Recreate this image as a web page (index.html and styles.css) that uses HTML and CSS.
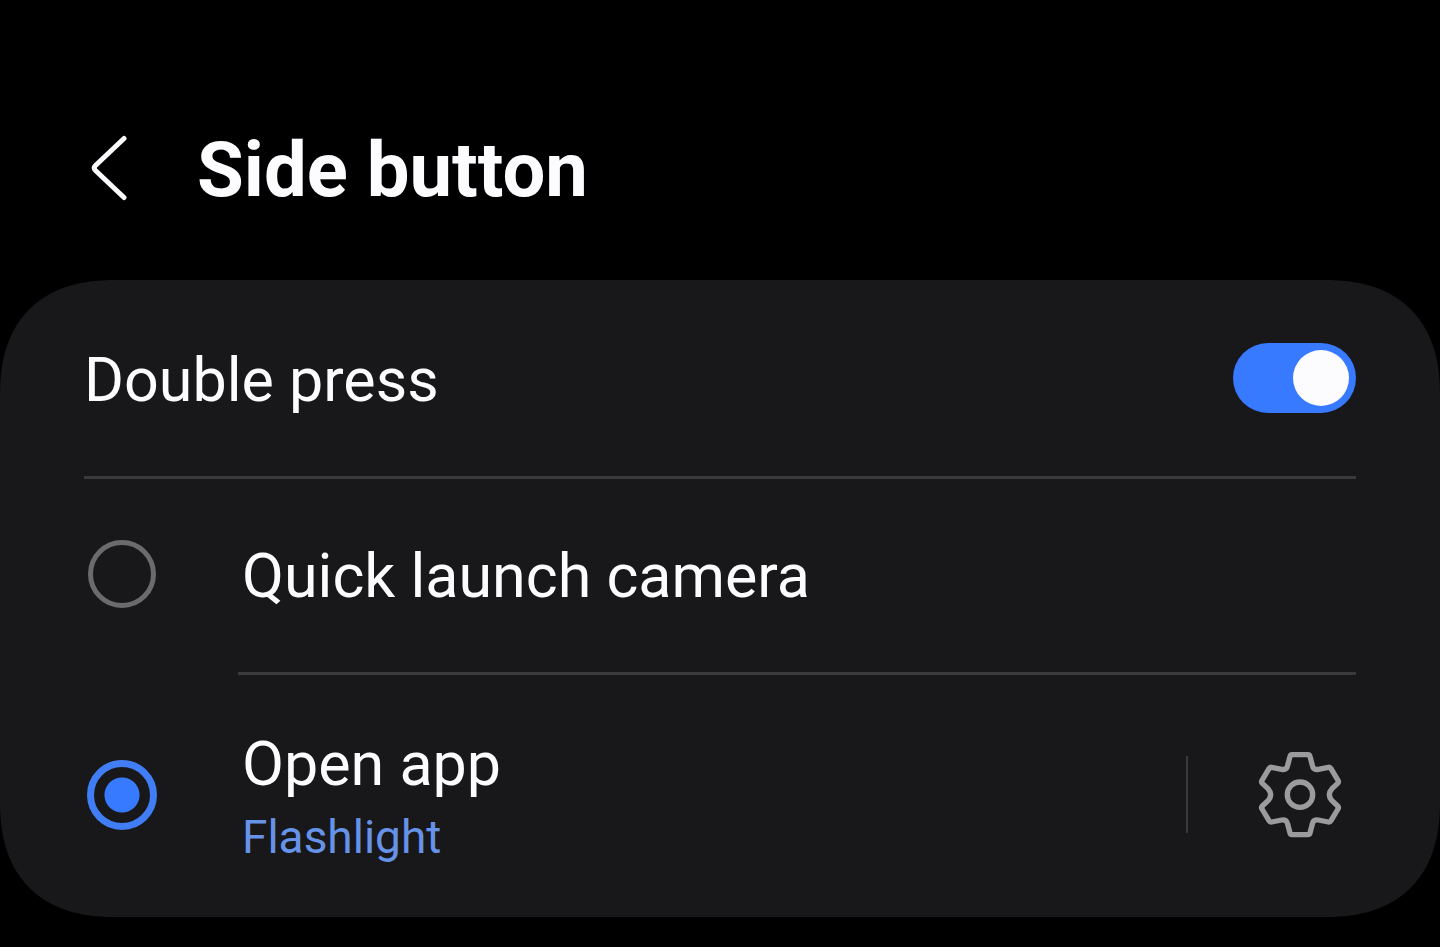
FILE: index.html
```
<!DOCTYPE html>
<html lang="en">
<head>
<meta charset="utf-8">
<meta name="viewport" content="width=device-width, initial-scale=1">
<title>Side button</title>
<link rel="stylesheet" href="styles.css">
</head>
<body>
<header class="header">
  <button class="icon-button" type="button" aria-label="Back">
    <svg class="chevron" viewBox="0 0 36 66" aria-hidden="true"><path d="M33 3.500L4.500 30.500Q2 33 4.500 35.500L33 62.500"/></svg>
  </button>
  <h1 class="title">Side button</h1>
</header>
<main class="card">
  <div class="row">
    <label class="label" for="double-press">Double press</label>
    <input class="switch" id="double-press" type="checkbox" role="switch" checked>
  </div>
  <div class="row row-option">
    <input class="radio" id="camera" type="radio" name="action">
    <label class="label" for="camera">Quick launch camera</label>
  </div>
  <div class="row row-option row-tall">
    <input class="radio" id="open-app" type="radio" name="action" checked>
    <label class="label" for="open-app">Open app<span class="summary">Flashlight</span></label>
    <div class="extra">
      <button class="icon-button" type="button" aria-label="Open app settings">
        <svg class="gear" viewBox="294 66 252 261" aria-hidden="true">
          <path d="M396 77H444Q449 77 450 82L457 109Q460 124 475 121L505 115Q510 114 513 119L534 154Q537 159 533 163L516 179Q500 197 516 215L533 231Q537 235 534 240L513 275Q510 280 505 279L475 273Q460 270 457 285L450 312Q449 317 444 317H396Q391 317 390 312L383 285Q380 270 365 273L335 279Q330 280 327 275L306 240Q303 235 307 231L324 215Q340 197 324 179L307 163Q303 159 306 154L327 119Q330 114 335 115L365 121Q380 124 383 109L390 82Q391 77 396 77Z"/>
          <circle cx="420" cy="197" r="38"/>
        </svg>
      </button>
    </div>
  </div>
</main>
</body>
</html>
```
FILE: styles.css
```
* {
  box-sizing: border-box;
}

body {
  margin: 0;
  background: #000;
  color: #fcfcff;
  font-family: Roboto, "Liberation Sans", sans-serif;
}

.header {
  display: flex;
  align-items: center;
  gap: 70px;
  padding: 112px 84px 56px 91px;
}

.title {
  margin: 0;
  padding-top: 4px;
  font-size: 76px;
  font-weight: 700;
  line-height: 108px;
}

.icon-button {
  display: flex;
  padding: 0;
  border: 0;
  background: none;
  color: inherit;
}

.chevron {
  width: 36px;
  height: 66px;
  fill: none;
  stroke: currentColor;
  stroke-width: 5;
  stroke-linecap: round;
}

.card {
  padding: 0 84px;
  border-radius: 96px;
  background: #18181a;
}

@supports (corner-shape: superellipse(1.25)) {
  .card {
    border-radius: 116px;
    corner-shape: superellipse(1.25);
  }
}

.row {
  display: flex;
  align-items: center;
  min-height: 196px;
}

.row-option {
  display: grid;
  grid-template-columns: 154px 1fr auto;
  background: linear-gradient(#3a3a3c, #3a3a3c) right top / calc(100% - 154px) 3px no-repeat;
}

.row:first-child + .row-option {
  background-size: 100% 3px;
}

.row-tall {
  min-height: 245px;
}

.label {
  flex: 1;
  padding: 4px 0 0 4px;
  font-size: 61px;
  line-height: 80px;
}

.row:first-child .label {
  padding-left: 0;
}

.summary {
  display: block;
  color: #6692e8;
  font-size: 46px;
  line-height: 66px;
}

.switch {
  display: flex;
  justify-content: flex-end;
  width: 123px;
  height: 70px;
  margin: 0;
  padding: 7px;
  border-radius: 35px;
  background: #387aff;
  appearance: none;
}

.switch::before {
  content: "";
  width: 56px;
  height: 56px;
  border-radius: 50%;
  background: #fcfcff;
}

.switch:not(:checked) {
  justify-content: flex-start;
  background: #6b6b6e;
}

.radio {
  width: 68px;
  height: 68px;
  margin: 0 4px;
  border: 5px solid #6b6b6e;
  border-radius: 50%;
  appearance: none;
}

.radio:checked {
  width: 70px;
  height: 70px;
  margin: 0 3px;
  border: 7px solid #417df5;
  background: radial-gradient(circle, #387aff 17px, transparent 18px);
}

.extra {
  display: flex;
  align-items: center;
  height: 77px;
  padding: 0 14px 0 70px;
  border-left: 2px solid #3a3a3c;
}

.gear {
  width: 84px;
  height: 87px;
  fill: none;
  stroke: #9b9b9d;
  stroke-width: 16;
  stroke-linejoin: round;
}
```
